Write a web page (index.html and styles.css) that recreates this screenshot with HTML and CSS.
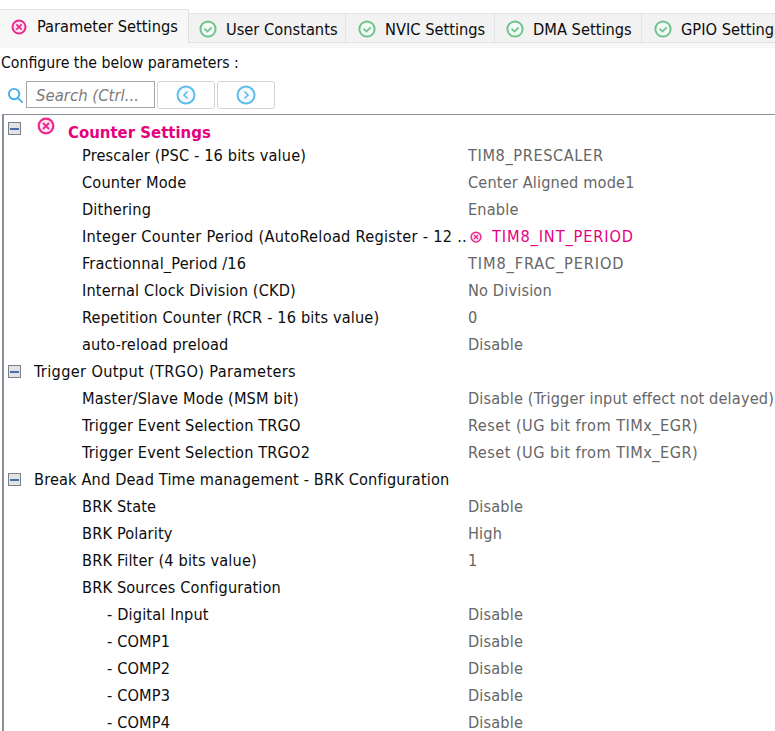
FILE: index.html
```html
<!DOCTYPE html>
<html lang="en">
<head>
<meta charset="utf-8">
<title>Parameter Settings</title>
<link rel="stylesheet" href="styles.css">
</head>
<body>
<svg width="0" height="0" class="defs">
  <defs>
    <g id="err">
      <circle cx="8" cy="8" r="6.500" fill="#fbe3f0" stroke="#ea2a8c" stroke-width="2"/>
      <path d="M5.300 5.300l5.400 5.400M10.700 5.300l-5.400 5.400" stroke="#ea2a8c" stroke-width="1.700" fill="none"/>
    </g>
    <g id="ok">
      <circle cx="9" cy="9" r="7.600" fill="#f4fbf6" stroke="#6cc48c" stroke-width="2"/>
      <path d="M5.500 8.600l3 3 4.200-4.200" stroke="#6cc48c" stroke-width="1.800" fill="none"/>
    </g>
    <g id="minus">
      <rect x=".5" y=".5" width="12" height="12" fill="#e2e3e4" stroke="#7c8085"/>
      <rect x="2" y="6" width="9" height="2" fill="#4a6ea8"/>
    </g>
  </defs>
</svg>
<nav class="tabs">
  <div class="tab active"><svg class="ic-err" viewBox="0 0 16 16"><use href="#err"/></svg><span>Parameter Settings</span></div>
  <div class="tab t1"><svg class="ic-ok" viewBox="0 0 18 18"><use href="#ok"/></svg><span>User Constants</span></div>
  <div class="tab t2"><svg class="ic-ok" viewBox="0 0 18 18"><use href="#ok"/></svg><span>NVIC Settings</span></div>
  <div class="tab t3"><svg class="ic-ok" viewBox="0 0 18 18"><use href="#ok"/></svg><span>DMA Settings</span></div>
  <div class="tab t4"><svg class="ic-ok" viewBox="0 0 18 18"><use href="#ok"/></svg><span>GPIO Settings</span></div>
</nav>
<p class="intro">Configure the below parameters :</p>
<div class="toolbar">
  <svg class="search-ic" viewBox="0 0 18 18"><circle cx="7.500" cy="7.500" r="5.500" fill="none" stroke="#42b0e6" stroke-width="2"/><path d="M11.500 11.500l5 5" stroke="#42b0e6" stroke-width="2"/></svg>
  <div class="search">Search (Ctrl...</div>
  <button class="nav-btn"><svg viewBox="0 0 20 20"><circle cx="10" cy="10" r="8.500" fill="#f2fafe" stroke="#5cbcec" stroke-width="2"/><path d="M11.500 6.500L8 10l3.500 3.500" fill="none" stroke="#5cbcec" stroke-width="1.600"/></svg></button>
  <button class="nav-btn"><svg viewBox="0 0 20 20"><circle cx="10" cy="10" r="8.500" fill="#f2fafe" stroke="#5cbcec" stroke-width="2"/><path d="M8.500 6.500L12 10l-3.500 3.500" fill="none" stroke="#5cbcec" stroke-width="1.600"/></svg></button>
</div>
<section class="tree">
  <div class="group first"><svg class="minus" viewBox="0 0 13 13"><use href="#minus"/></svg><svg class="ic-group" viewBox="0 0 16 16"><use href="#err"/></svg><b class="err-title">Counter Settings</b></div>
  <div class="row"><span class="name">Prescaler (PSC - 16 bits value)</span><span class="val caps">TIM8_PRESCALER</span></div>
  <div class="row"><span class="name">Counter Mode</span><span class="val">Center Aligned mode1</span></div>
  <div class="row"><span class="name">Dithering</span><span class="val">Enable</span></div>
  <div class="row"><span class="name long">Integer Counter Period (AutoReload Register - 12 ..</span><span class="val err caps-wide"><svg class="ic-small" viewBox="0 0 16 16"><use href="#err"/></svg>TIM8_INT_PERIOD</span></div>
  <div class="row"><span class="name">Fractionnal_Period /16</span><span class="val caps-wide">TIM8_FRAC_PERIOD</span></div>
  <div class="row"><span class="name">Internal Clock Division (CKD)</span><span class="val">No Division</span></div>
  <div class="row"><span class="name">Repetition Counter (RCR - 16 bits value)</span><span class="val">0</span></div>
  <div class="row"><span class="name">auto-reload preload</span><span class="val">Disable</span></div>
  <div class="group"><svg class="minus" viewBox="0 0 13 13"><use href="#minus"/></svg><span class="wide">Trigger Output (TRGO) Parameters</span></div>
  <div class="row"><span class="name">Master/Slave Mode (MSM bit)</span><span class="val">Disable (Trigger input effect not delayed)</span></div>
  <div class="row"><span class="name">Trigger Event Selection TRGO</span><span class="val mixed">Reset (UG bit from TIMx_EGR)</span></div>
  <div class="row"><span class="name">Trigger Event Selection TRGO2</span><span class="val mixed">Reset (UG bit from TIMx_EGR)</span></div>
  <div class="group"><svg class="minus" viewBox="0 0 13 13"><use href="#minus"/></svg><span>Break And Dead Time management - BRK Configuration</span></div>
  <div class="row"><span class="name">BRK State</span><span class="val">Disable</span></div>
  <div class="row"><span class="name">BRK Polarity</span><span class="val">High</span></div>
  <div class="row"><span class="name">BRK Filter (4 bits value)</span><span class="val">1</span></div>
  <div class="row"><span class="name">BRK Sources Configuration</span><span class="val"></span></div>
  <div class="row sub"><span class="name">- Digital Input</span><span class="val">Disable</span></div>
  <div class="row sub"><span class="name">- COMP1</span><span class="val">Disable</span></div>
  <div class="row sub"><span class="name">- COMP2</span><span class="val">Disable</span></div>
  <div class="row sub"><span class="name">- COMP3</span><span class="val">Disable</span></div>
  <div class="row sub"><span class="name">- COMP4</span><span class="val">Disable</span></div>
</section>
</body>
</html>
```
FILE: styles.css
```css
html, body {
  margin: 0;
  padding: 0;
  width: 775px;
  height: 731px;
  overflow: hidden;
  background: #fff;
  color: #0c0c0c;
  font-family: "DejaVu Sans Condensed", "DejaVu Sans", sans-serif;
  font-stretch: condensed;
  font-size: 15.5px;
}
.defs { display: block; height: 0; }
.tabs {
  display: flex;
  align-items: flex-end;
  height: 48px;
  padding-top: 9px;
  box-sizing: border-box;
  padding-bottom: 5px;
  background: linear-gradient(#fff 0, #fff 43px, #f7f7f7 43px);
  font-size: 16.3px;
  white-space: nowrap;
  overflow: hidden;
}
.tab {
  display: flex;
  align-items: center;
  flex: none;
  height: 30px;
  box-sizing: border-box;
  padding-top: 2px;
  background: #f2f2f2;
  border: 1px solid #e2e2e2;
  border-left: 0;
}
.tab.active {
  width: 189px;
  height: 34px;
  background: #f7f7f7;
  border-bottom: 0;
  padding: 0 0 0 11px;
  gap: 10px;
}
.t1 { width: 157px; padding-left: 10px; gap: 9px; }
.t2 { width: 149px; padding-left: 12px; gap: 9px; }
.t3 { width: 147px; padding-left: 11px; gap: 9px; }
.t4 { width: 160px; padding-left: 12px; gap: 9px; }
.ic-err { width: 16px; height: 16px; flex: none; }
.ic-ok { width: 18px; height: 18px; flex: none; }
.intro {
  margin: 0;
  height: 28px;
  line-height: 30px;
  padding-left: 1px;
  font-size: 15.7px;
}
.toolbar {
  display: flex;
  align-items: flex-start;
  height: 28px;
  margin-top: 5px;
  margin-bottom: 5px;
  padding-left: 7px;
}
.search-ic { width: 17px; height: 17px; margin: 6px 2px 0 0; flex: none; }
.search {
  width: 129px;
  height: 27px;
  box-sizing: border-box;
  border: 1px solid #a4a6a8;
  padding-left: 9px;
  line-height: 28px;
  font-size: 16.6px;
  font-style: italic;
  color: #7c7c7c;
}
.nav-btn {
  width: 58px;
  height: 28px;
  margin-left: 2px;
  padding: 0;
  display: flex;
  align-items: center;
  justify-content: center;
  background: #fff;
  border: 1px solid #d4d4d4;
  border-radius: 3px;
}
.nav-btn svg { width: 20px; height: 20px; }
.tree {
  margin-left: 2px;
  border: 1px solid #8a8f98;
  border-width: 1px 0 0 2px;
  height: 616px;
  overflow: hidden;
  font-size: 16.2px;
  letter-spacing: .15px;
}
.group, .row {
  display: flex;
  align-items: center;
  height: 27px;
  white-space: nowrap;
}
.minus { width: 13px; height: 13px; margin-left: 4px; margin-right: 13px; flex: none; }
.ic-group { width: 18px; height: 18px; margin: -6px 13px 0 3px; flex: none; }
.err-title { color: #e6007e; font-weight: 700; font-size: 16.6px; letter-spacing: 0; margin-top: 7px; }
.wide { letter-spacing: .35px; }
.row { padding-left: 78px; }
.row.sub { padding-left: 103px; }
.name { flex: none; width: 386px; overflow: hidden; }
.name.long { letter-spacing: .29px; }
.row.sub .name { width: 361px; }
.val { color: #666; }
.val.caps { letter-spacing: .6px; }
.val.caps-wide { letter-spacing: .88px; }
.val.mixed { letter-spacing: .45px; }
.val.err { color: #e6007e; display: flex; align-items: center; }
.ic-small { width: 12px; height: 12px; margin-right: 10px; margin-left: 2px; flex: none; }
```
